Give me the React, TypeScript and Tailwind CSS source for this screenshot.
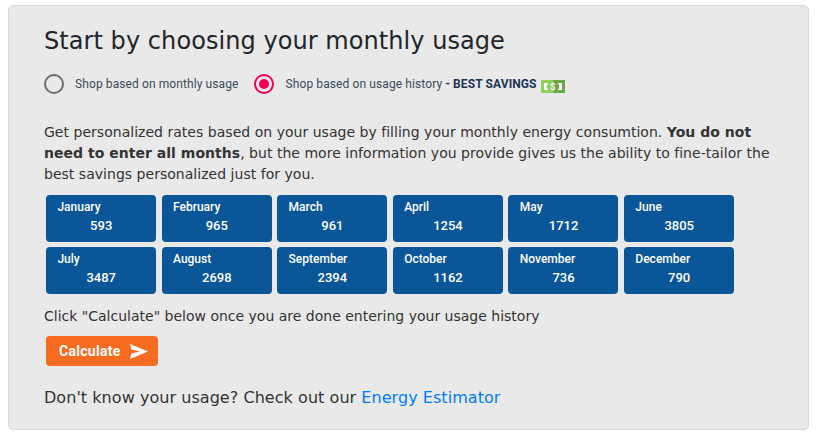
const MONTHS = [
  ['January', '593'],
  ['February', '965'],
  ['March', '961'],
  ['April', '1254'],
  ['May', '1712'],
  ['June', '3805'],
  ['July', '3487'],
  ['August', '2698'],
  ['September', '2394'],
  ['October', '1162'],
  ['November', '736'],
  ['December', '790'],
]

function MoneyIcon() {
  return (
    <svg width="24" height="13" viewBox="0 0 24 13" className="mt-[4px] ml-[4px] shrink-0">
      <rect width="12" height="13" fill="#8fd158" />
      <rect x="12" width="12" height="13" fill="#6aa84a" />
      <path d="M3 3h4.500C5.500 4.500 5 8.500 7.500 10H3z" fill="#fff" />
      <path d="M21 3h-4.500C18.500 4.500 19 8.500 16.500 10H21z" fill="#fff" />
      <text x="12" y="10" textAnchor="middle" fontSize="9" fontWeight="700" fill="#fff" fontFamily="Roboto, sans-serif">$</text>
    </svg>
  )
}

export default function App() {
  return (
    <div className="w-[816px] h-[435px] bg-white pt-[5px] pl-2 font-['DejaVu_Sans',sans-serif]">
      <div className="w-[801px] h-[425px] bg-[#e9e9e9] border border-[#d9d9d9] rounded-[5px] pl-[35px] pt-[17px]">
        <h2 className="text-[24px] leading-[36px] text-[#212529] font-normal tracking-[0.06px]">Start by choosing your monthly usage</h2>

        <div className="flex items-center mt-[14px] h-[22px] font-['Roboto',sans-serif] text-[12px] tracking-[0.1px] text-[#3a4a5a]">
          <span className="w-5 h-5 rounded-full border-[2.5px] border-[#6b6b6b] shrink-0" />
          <span className="ml-[11px]">Shop based on monthly usage</span>
          <span className="ml-[15px] w-5 h-5 rounded-full border-[2.5px] border-[#f50057] shrink-0 flex items-center justify-center">
            <span className="w-[10px] h-[10px] rounded-full bg-[#f50057]" />
          </span>
          <span className="ml-[12px]">Shop based on usage history</span>
          <span className="ml-[3px] font-bold text-[#1d3557]">- BEST SAVINGS</span>
          <MoneyIcon />
        </div>

        <p className="mt-[27px] w-[740px] text-[14px] leading-[21px] text-[#333] tracking-[0.025px]">
          Get personalized rates based on your usage by filling your monthly energy consumtion. <b>You do not need to enter all months</b>, but the more information you provide gives us the ability to fine-tailor the best savings personalized just for you.
        </p>

        <div className="grid grid-cols-[repeat(6,110px)] gap-x-[5.6px] gap-y-[5.5px] mt-[10px] ml-[2px] font-['Roboto',sans-serif] text-white">
          {MONTHS.map(([name, value]) => (
            <div key={name} className="h-[46.5px] bg-[#0a5699] rounded-[4px] pl-[11.4px] pt-[4.4px]">
              <div className="text-[12px] leading-[16px] font-medium">{name}</div>
              <div className="text-[13px] leading-[18px] font-medium text-center mt-[2px] pr-[11px]">{value}</div>
            </div>
          ))}
        </div>

        <p className="mt-[12.5px] text-[14px] leading-[21px] text-[#333]">Click "Calculate" below once you are done entering your usage history</p>

        <button className="mt-[9px] ml-[2px] w-[112px] h-[30px] bg-[#f76b21] rounded-[4px] flex items-center pl-[13px] font-['Roboto',sans-serif] font-bold text-[14px] tracking-[0.3px] text-white">
          Calculate
          <svg width="18" height="15" viewBox="0 0 18 15" className="ml-[9px]">
            <path d="M0 0 18 7.500 0 15 1.500 9.500 10 7.500 1.500 5.500z" fill="#fff" />
          </svg>
        </button>

        <p className="mt-[20px] text-[16px] leading-[24px] text-[#333] tracking-[0.05px]">
          Don't know your usage? Check out our <span className="text-[#007bff]">Energy Estimator</span>
        </p>
      </div>
    </div>
  )
}
